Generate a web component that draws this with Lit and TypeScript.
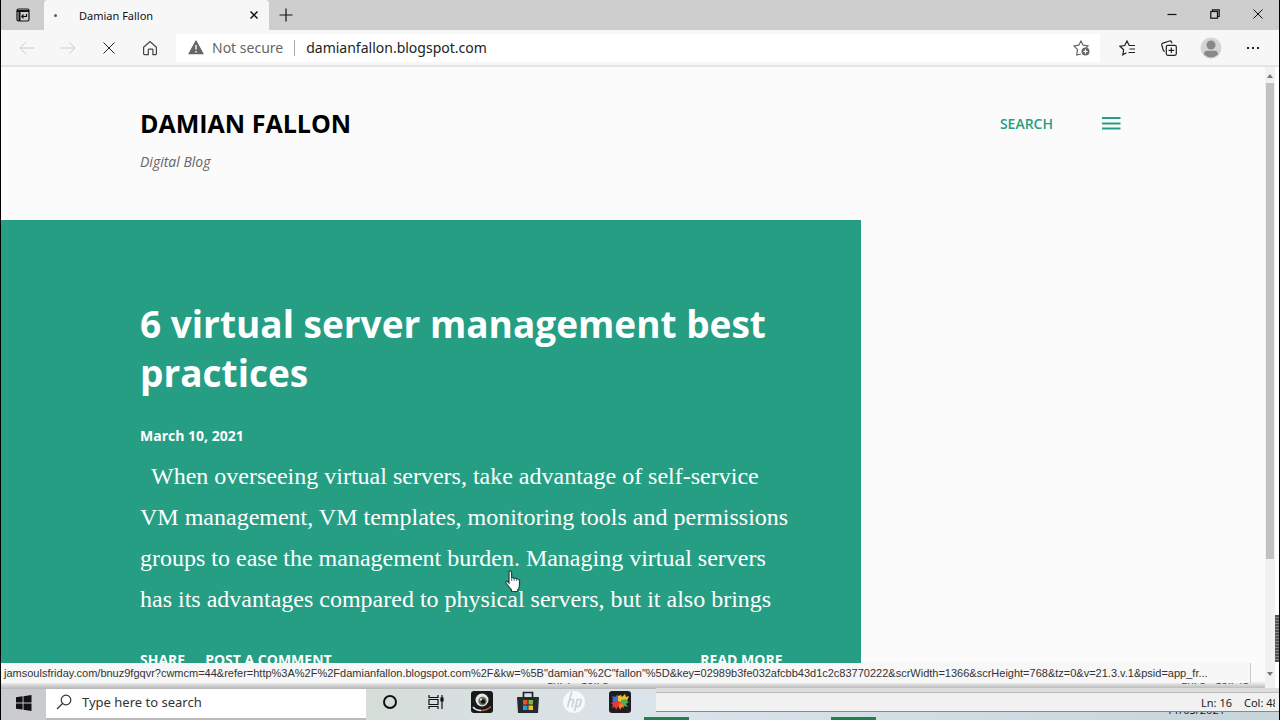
import { LitElement, html, css, svg } from "lit";
import { customElement } from "lit/decorators.js";

const icon = (w: number, h: number, body: unknown) =>
  html`<svg width=${w} height=${h} viewBox="0 0 ${w} ${h}" fill="none" stroke="currentColor" stroke-width="1.2" aria-hidden="true">${body}</svg>`;

const icons = {
  tabs: icon(14, 14, svg`<rect x="1" y="1" width="12" height="12" rx="1.5"/><path d="M1 3h12M3.5 3v10" stroke-width="2"/><path d="M10.500 6v2.500H6M7.500 6.500L5.800 8.500L7.500 10.300"/>`),
  close: icon(10, 10, svg`<path d="M1.500 1.500l7 7M8.500 1.500l-7 7" stroke-width="1.500"/>`),
  plus: icon(14, 14, svg`<path d="M7 0.500v13M0.500 7h13"/>`),
  min: icon(10, 10, svg`<path d="M0.500 5.500h9"/>`),
  restore: icon(10, 10, svg`<rect x="0.800" y="2.500" width="6.700" height="6.700"/><path d="M2.500 2.500V0.800h6.700v6.700H7.500"/>`),
  winClose: icon(12, 12, svg`<path d="M1.500 1.500l9 9M10.500 1.500l-9 9" stroke-width="1"/>`),
  back: icon(16, 14, svg`<path d="M15.500 7H1M7 1L1 7l6 6" stroke-width="1"/>`),
  forward: icon(16, 14, svg`<path d="M0.500 7H15M9 1l6 6l-6 6" stroke-width="1"/>`),
  stop: icon(14, 14, svg`<path d="M1.500 1.500l11 11M12.500 1.500l-11 11" stroke-width="1"/>`),
  home: icon(16, 16, svg`<path d="M1.600 7.300L8 1.500l6.400 5.800v6.400q0 .9-.9.900h-2.600V10q0-.8-.8-.8H7.200q-.9 0-.9.800v4.600H2.500q-.9 0-.9-.9z" stroke="#444"/>`),
  warn: icon(16, 15, svg`<path d="M8 1L15 13.700H1z" fill="currentColor" stroke-linejoin="round"/><path d="M8 5v4.500M8 11v1.600" stroke="#fff" stroke-width="1.400"/>`),
  starAdd: icon(18, 16, svg`<path d="M8 14l-4.300 1 .8-5.400L1 6l4.800-.8L8 1l2.200 4.200L15 6l-2 2.200"/><circle cx="12.500" cy="11.500" r="4" fill="currentColor" stroke="none"/><path d="M12.500 9.300v4.400M10.300 11.500h4.400" stroke="#fff"/>`),
  starList: icon(17, 16, svg`<path d="M7.500 12.700L3.800 14.800l.8-5L1 6.300l4.700-.8L8 1l2.200 4.500H16M10.500 9H16M9.500 12.500H16"/>`),
  collections: icon(16, 16, svg`<rect x="5.300" y="5.300" width="10" height="10" rx="1.500"/><path d="M10.300 7.500v5.600M7.500 10.300h5.600M3.800 11.500Q2.600 11.300 2.200 10L0.800 5Q.5 3.600 1.900 3.100L8.500 1q1.400-.4 2 .9l.4 1.300"/>`),
  user: icon(22, 22, svg`<circle cx="11" cy="11" r="10.500" fill="#d6d4d2" stroke="none"/><circle cx="11" cy="8" r="4.500" fill="#8a8886" stroke="none"/><path d="M4 17.500q0-3.800 3-3.800h8q3 0 3 3.800q-7 6-14 0z" fill="#8a8886" stroke="none"/>`),
  dots: icon(14, 4, svg`<path d="M1 1h2v2H1zM6 1h2v2H6zM11 1h2v2h-2z" fill="currentColor" stroke="none"/>`),
  menu: icon(20, 14, svg`<path d="M1 2h18.500M1 7.500h18.500M1 12.500h18.500" stroke-width="2"/>`),
  up: icon(8, 6, svg`<path d="M1 5l3-4l3 4z" fill="currentColor" stroke="none"/>`),
  down: icon(8, 6, svg`<path d="M1 1l3 4l3-4z" fill="currentColor" stroke="none"/>`),
  windows: icon(16, 16, svg`<path d="M0 2.300L6.600 1.300V7.500H0zM7.500 1.200L15.500 0v7.500h-8zM0 8.400h6.600v6.200L0 13.700zM7.500 8.400h8V16l-8-1.200z" fill="currentColor" stroke="none"/>`),
  search: icon(16, 16, svg`<circle cx="10" cy="6" r="4.800"/><path d="M6.500 9.500L1 15"/>`),
  cortana: icon(16, 16, svg`<circle cx="8" cy="8" r="6" stroke-width="2"/>`),
  taskview: icon(16, 16, svg`<path d="M1 1v2.500h9V1M1 15v-2.500h9V15M1 5.500h9v5H1zM14 1v14"/><path d="M13 4h2v3h-2z" fill="currentColor"/>`),
  webcam: icon(22, 22, svg`<rect width="22" height="22" rx="3" fill="#171a19" stroke="none"/><circle cx="11" cy="9" r="6.500" fill="#e4e7e2" stroke="none"/><circle cx="11.500" cy="10" r="4.200" fill="#667261" stroke="none"/><circle cx="12" cy="10.500" r="2.300" fill="#111" stroke="none"/><circle cx="10" cy="8.500" r="1" fill="#fff" stroke="none"/><path d="M2 16q3 3.500 8 3.500" stroke="#eee" stroke-width="1.600"/><path d="M10 19.500q6 0 10-4" stroke="#b85f48" stroke-width="1.600"/>`),
  store: icon(22, 24, svg`<path d="M6.500 7V2.500h9V7" stroke="#222" stroke-width="1.700"/><path d="M0 7h22l-1 16H1z" fill="#252a2c" stroke="none"/><path d="M6 10h4.500v4.500H6z" fill="#e8532b" stroke="none"/><path d="M11.500 10H16v4.500h-4.500z" fill="#82b43c" stroke="none"/><path d="M6 15.500h4.500V20H6z" fill="#28a0da" stroke="none"/><path d="M11.500 15.500H16V20h-4.500z" fill="#f5bd30" stroke="none"/>`),
  hp: icon(24, 24, svg`<circle cx="12" cy="12" r="11" fill="#f6f8fa" stroke="none"/><path d="M9.800 2L5.500 17M8 9.500h2.500q1.500 0 1 1.700L9.800 17M18 9.500h-2.700L12.500 21M18 9.500q1.400 0 1 1.700l-1.200 4q-.4 1.500-2 1.500h-1.600" stroke="#c9d1da" stroke-width="1.700"/>`),
  splat: icon(22, 22, svg`<rect width="22" height="22" rx="3" fill="#201c20" stroke="none"/><path d="M3 5l3 1 2-2 3 2v5l-4 1-4-2 1-2z" fill="#3f6fd0" stroke="none"/><path d="M9 5l3-1 1 2 3-3 1 3 3-1-2 5-6 2-3-2z" fill="#e9c22a" stroke="none"/><path d="M12 9l5-1 1 2 2 1-3 2 2 3-4-1-3 1z" fill="#4cae4c" stroke="none"/><path d="M2 12l5-2 5 1v4l-3 1-2 3-1-3-3 1 1-3z" fill="#e23a34" stroke="none"/><path d="M10 12l4 1 1 4-2-1-2 3-1-3z" fill="#e8812a" stroke="none"/>`),
  hand: icon(18, 24, svg`<path d="M5 2.500q1.500-1.500 2.600.4V9q1.500-1 2.500.5q1.600-.9 2.500.7q2.900-.8 2.900 1.800v4q0 3-1.800 5v1.500H7.500V21Q4.500 17.500 2 14q-.7-2 1.200-1.700L5 14z" fill="#fff" stroke="#25443c"/><path d="M7.600 9v3M10.100 9.500V12M12.600 10.200V12" stroke="#789"/>`),
};

@customElement("app-root")
export class AppRoot extends LitElement {
  static styles = css`
    :host {
      display: flex;
      flex-direction: column;
      height: 100vh;
      box-sizing: border-box;
      overflow: hidden;
      position: relative;
      border: solid #000;
      border-width: 0 1px;
      background: #fbfbfb;
      color: #222;
      font-family: "Open Sans", "Noto Sans", sans-serif;
    }
    * { box-sizing: border-box; }
    svg { display: block; flex: none; }
    button { border: 0; padding: 0; background: none; color: inherit; font: inherit; display: grid; place-items: center; }
    input { border: 0; padding: 0; outline: 0; background: none; color: inherit; font: inherit; min-width: 0; flex: 1; }
    a { color: inherit; text-decoration: none; }
    h1, h2, p { margin: 0; }

    .tabs { display: flex; height: 30px; background: #cecece; color: #111; flex: none; }
    .tab-actions { width: 43px; }
    .tab { display: flex; align-items: center; width: 225px; padding: 0 10px; background: #f7f7f7; border-radius: 4px 4px 0 0; font-family: "Noto Sans", sans-serif; font-size: 11px; }
    .loading { width: 3px; height: 3px; border-radius: 50%; background: #35678f; margin: 0 22px 0 0; }
    .tab-title { flex: 1; }
    .new-tab { width: 34px; }
    .window-buttons { display: flex; margin-left: auto; }
    .window-buttons button { width: 43px; height: 27px; }

    .toolbar { display: flex; align-items: center; height: 37px; flex: none; background: #f7f7f7; border-bottom: 2px solid #e4e4e4; padding: 0 5px; }
    .tool { width: 41px; height: 30px; }
    .disabled { color: #ccc; }
    .address { display: flex; align-items: center; flex: 1; height: 28px; margin: 0 6px 0 6px; padding: 0 9px 0 12px; border-radius: 2px; background: #fff; font-family: "Noto Sans", sans-serif; font-size: 14px; }
    .insecure { display: flex; align-items: center; gap: 8px; color: #666; padding-right: 11px; border-right: 1px solid #aaa; margin-right: 11px; line-height: 16px; }
    .right-tool { width: 42px; height: 30px; }
    .star { color: #666; }

    .window { display: flex; flex: 1; min-height: 0; }
    .viewport { display: flex; flex-direction: column; flex: 1; min-width: 0; }
    .page { flex: 1; min-height: 0; overflow: hidden; }
    .blog-header { display: flex; justify-content: space-between; padding: 38px 144px 48px 139px; }
    .blog-title { font-size: 25px; line-height: 36px; font-weight: 700; color: #000; text-transform: uppercase; }
    .tagline { margin-top: 11px; font-size: 14px; line-height: 20px; font-style: italic; color: #666; }
    .blog-nav { display: flex; align-items: center; gap: 48px; height: 36px; color: #269e83; font-size: 14px; font-weight: 600; }
    .post { width: 68%; min-width: 780px; padding: 79px 78px 30px 139px; background: #259e83; color: #fff; }
    .post-title { font-size: 37px; line-height: 49px; font-weight: 700; }
    .date { margin-top: 29px; font-size: 14px; line-height: 20px; font-weight: 700; }
    .snippet { margin-top: 10px; font-family: "Liberation Serif", serif; font-size: 24px; line-height: 41px; text-indent: 11px; white-space: pre; }
    .post-actions { display: flex; gap: 20px; margin-top: 30px; font-size: 14px; line-height: 20px; font-weight: 700; }
    .more { margin-left: auto; }

    .status { display: flex; flex-direction: column; height: 26px; flex: none; background: linear-gradient(#fafafa 70%, #cfcfcf 88%, #b5b5b5); }
    .link-target { width: 1250px; max-width: 100%; height: 20px; padding: 0 3px; background: #f7f7f7; border-right: 1px solid #ccc; font-family: "Liberation Sans", sans-serif; font-size: 11px; line-height: 20px; white-space: nowrap; overflow: hidden; color: #333; }
    .carets { display: flex; justify-content: space-between; height: 4px; overflow: hidden; padding: 0 16px 0 546px; font-size: 11px; line-height: 14px; align-items: end; color: #444; }

    .scrollbar { display: flex; flex-direction: column; align-items: center; width: 10px; background: #f1f1f1; padding: 6px 0 12px; color: #777; flex: none; }
    .thumb { width: 8px; height: 476px; margin: 4px 0 auto; background: #c1c1c1; }
    .behind { width: 4px; background: #fff; padding-top: 548px; flex: none; }
    .behind-thumb { height: 47px; background: repeating-linear-gradient(#555 0 2px, #888 2px 3px); }

    .taskbar { display: flex; align-items: center; height: 31px; flex: none; background: linear-gradient(90deg, #d5ddd8 28%, #dbe3eb 50%, #c6d5da); color: #111; }
    .start { width: 45px; height: 31px; padding-bottom: 4px; background: #c9cbcf; }
    .taskbar-search { display: flex; align-items: center; gap: 10px; width: 320px; height: 31px; padding: 0 10px 4px; background: #fff; border-bottom: 2px solid #bbb; font-family: "Noto Sans", sans-serif; font-size: 13px; color: #333; }
    .apps { display: flex; padding: 0 0 5px 1px; }
    .app { width: 46px; height: 24px; }
    .running { align-self: end; width: 45px; height: 3px; margin-left: 1px; background: #23804c; }
    .running + .running { margin-left: 142px; }
    .clock { margin: 0 54px 0 auto; align-self: end; font-size: 11px; line-height: 20px; }

    .notepad { position: absolute; left: 655px; right: 0; bottom: 8px; height: 24px; display: flex; justify-content: flex-end; gap: 12px; padding: 5px 4px 0 0; background: linear-gradient(#ddd 4px, #bbb 4px 5px, #f1f1f1 5px); border-bottom: 1px solid #888; font-family: "Noto Sans", sans-serif; font-size: 11px; line-height: 20px; overflow: hidden; white-space: nowrap; }
    .column { width: 31px; overflow: hidden; }
    .pointer { position: absolute; left: 503px; top: 569px; }
  `;

  render() {
    return html`
      <header class="tabs">
        <button class="tab-actions" aria-label="Tab actions">${icons.tabs}</button>
        <div class="tab"><span class="loading"></span><span class="tab-title">Damian Fallon</span><button aria-label="Close tab">${icons.close}</button></div>
        <button class="new-tab" aria-label="New tab">${icons.plus}</button>
        <div class="window-buttons">
          <button aria-label="Minimize">${icons.min}</button>
          <button aria-label="Restore">${icons.restore}</button>
          <button aria-label="Close">${icons.winClose}</button>
        </div>
      </header>
      <nav class="toolbar">
        <button class="tool disabled" aria-label="Back">${icons.back}</button>
        <button class="tool disabled" aria-label="Forward">${icons.forward}</button>
        <button class="tool" aria-label="Stop">${icons.stop}</button>
        <button class="tool" aria-label="Home">${icons.home}</button>
        <div class="address">
          <span class="insecure">${icons.warn}Not secure</span>
          <input aria-label="Address" .value=${"damianfallon.blogspot.com"} />
          <button class="star" aria-label="Add to favorites">${icons.starAdd}</button>
        </div>
        <button class="right-tool" aria-label="Favorites">${icons.starList}</button>
        <button class="right-tool" aria-label="Collections">${icons.collections}</button>
        <button class="right-tool" aria-label="Profile">${icons.user}</button>
        <button class="right-tool" aria-label="Settings and more">${icons.dots}</button>
      </nav>
      <div class="window">
        <div class="viewport">
          <main class="page">
            <header class="blog-header">
              <div><h1 class="blog-title">Damian Fallon</h1><p class="tagline">Digital Blog</p></div>
              <div class="blog-nav"><a href="#search">SEARCH</a><button aria-label="Menu">${icons.menu}</button></div>
            </header>
            <article class="post">
              <h2 class="post-title">6 virtual server management best practices</h2>
              <p class="date">March 10, 2021</p>
              <p class="snippet">When overseeing virtual servers, take advantage of self-service
VM management, VM templates, monitoring tools and permissions
groups to ease the management burden. Managing virtual servers
has its advantages compared to physical servers, but it also brings</p>
              <div class="post-actions"><a href="#share">SHARE</a><a href="#comment">POST A COMMENT</a><a class="more" href="#more">READ MORE</a></div>
            </article>
          </main>
          <div class="status">
            <div class="link-target">jamsoulsfriday.com/bnuz9fgqvr?cwmcm=44&amp;refer=http%3A%2F%2Fdamianfallon.blogspot.com%2F&amp;kw=%5B"damian"%2C"fallon"%5D&amp;key=02989b3fe032afcbb43d1c2c83770222&amp;scrWidth=1366&amp;scrHeight=768&amp;tz=0&amp;v=21.3.v.1&amp;psid=app_fr...</div>
            <div class="carets"><span>Ln: 1 &nbsp; Col: 8</span><span>Ln: 8 &nbsp; Col: 48</span></div>
          </div>
        </div>
        <div class="scrollbar">${icons.up}<div class="thumb"></div>${icons.down}</div>
        <div class="behind"><div class="behind-thumb"></div></div>
      </div>
      <footer class="taskbar">
        <button class="start" aria-label="Start">${icons.windows}</button>
        <label class="taskbar-search">${icons.search}<input aria-label="Search" .value=${"Type here to search"} /></label>
        <div class="apps">
          <button class="app" aria-label="Cortana">${icons.cortana}</button>
          <button class="app" aria-label="Task view">${icons.taskview}</button>
          <button class="app" aria-label="Camera">${icons.webcam}</button>
          <button class="app" aria-label="Store">${icons.store}</button>
          <button class="app" aria-label="HP">${icons.hp}</button>
          <button class="app" aria-label="Paint">${icons.splat}</button>
        </div>
        <span class="running"></span><span class="running"></span>
        <span class="clock">11/03/2021</span>
      </footer>
      <div class="notepad"><span>Ln: 16</span><span class="column">Col: 48</span></div>
      <div class="pointer">${icons.hand}</div>
    `;
  }
}
